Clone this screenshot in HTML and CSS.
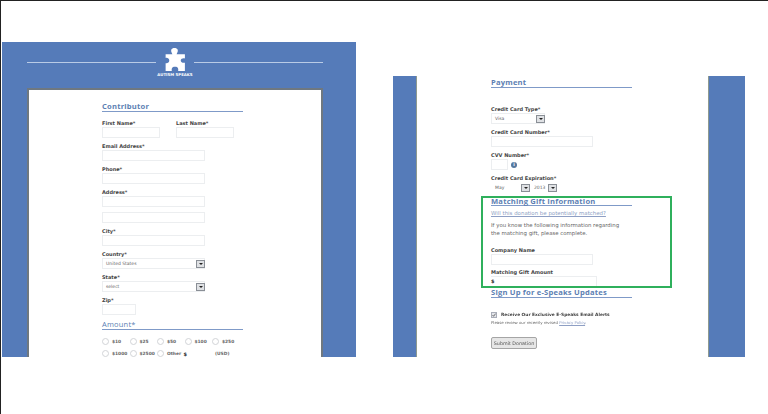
FILE: index.html
```html
<!DOCTYPE html>
<html lang="en">
<head>
<meta charset="utf-8">
<title>Donation form</title>
<link rel="stylesheet" href="styles.css">
</head>
<body>
<main class="stage">
  <section class="panel panel-left">
    <header class="brand">
      <span class="rule"></span>
      <div class="logo">
        <svg class="puzzle" viewBox="0 0 20 24" aria-hidden="true"><path d="M1 7H7.500C6.500 5 6 4 6.500 2.500C7 .5 12 .5 12.500 2.500C13 4 12.500 5 11.500 7H19.500V11C18 10.500 15.500 11 15.500 13C15.500 15 18 15.500 19.500 15V23H13C13.500 21 13 19 10 19C7 19 6.500 21 7 23H1V15.500C2.500 16 4.500 15 4.500 13C4.500 11 2.500 10 1 10.500Z" fill="#fff"/></svg>
        <span class="logo-text">AUTISM SPEAKS</span>
      </div>
      <span class="rule"></span>
    </header>
    <div class="card">
      <div class="form">
        <h2 class="heading">Contributor</h2>
        <div class="pair">
          <div><label class="label">First Name*</label><div class="input w58"></div></div>
          <div><label class="label">Last Name*</label><div class="input w58"></div></div>
        </div>
        <label class="label">Email Address*</label><div class="input w103"></div>
        <label class="label">Phone*</label><div class="input w103"></div>
        <label class="label">Address*</label><div class="input w103"></div><div class="input w103 again"></div>
        <label class="label">City*</label><div class="input w103"></div>
        <label class="label">Country*</label>
        <div class="select w103"><span>United States</span><i class="arrow"></i></div>
        <label class="label">State*</label>
        <div class="select w103"><span>select</span><i class="arrow"></i></div>
        <label class="label">Zip*</label><div class="input w34"></div>
        <h2 class="heading amount">Amount*</h2>
        <div class="radios">
          <span class="radio">$10</span><span class="radio">$25</span><span class="radio">$50</span><span class="radio">$100</span><span class="radio">$250</span>
        </div>
        <div class="radios second">
          <span class="radio">$1000</span><span class="radio">$2500</span><span class="radio">Other</span><span class="dollar">$</span><span class="usd">(USD)</span>
        </div>
      </div>
    </div>
  </section>
  <section class="panel panel-right">
    <div class="form">
      <h2 class="heading">Payment</h2>
      <label class="label first">Credit Card Type*</label>
      <div class="select w54"><span>Visa</span><i class="arrow"></i></div>
      <label class="label">Credit Card Number*</label><div class="input w102"></div>
      <label class="label">CVV Number*</label>
      <div class="cvv"><div class="input w17"></div><i class="info">i</i></div>
      <label class="label">Credit Card Expiration*</label>
      <div class="expiry">
        <div class="select w39"><span>May</span><i class="arrow"></i></div>
        <div class="select w26"><span>2013</span><i class="arrow"></i></div>
      </div>
      <div class="match">
        <h2 class="heading">Matching Gift Information</h2>
        <a class="link">Will this donation be potentially matched?</a>
        <p class="note">If you know the following information regarding<br>the matching gift, please complete.</p>
        <label class="label">Company Name</label><div class="input w102"></div>
        <label class="label">Matching Gift Amount</label>
        <div class="input w106 money">$</div>
      </div>
      <h2 class="heading signup">Sign Up for e-Speaks Updates</h2>
      <div class="check">
        <svg class="box" viewBox="0 0 6 6" aria-hidden="true"><rect x=".5" y=".5" width="5" height="5" fill="#e3e5ea" stroke="#a9adb8"/><path d="M1.500 3L2.600 4.300L4.600 1.600" fill="none" stroke="#555" stroke-width=".8"/></svg>
        <span>Receive Our Exclusive E-Speaks Email Alerts</span>
      </div>
      <p class="fine">Please review our recently revised <a class="link">Privacy Policy</a>.</p>
      <button class="submit" type="button">Submit Donation</button>
    </div>
  </section>
</main>
</body>
</html>
```
FILE: styles.css
```css
* { box-sizing: border-box; }
html, body { margin: 0; padding: 0; background: #fff; }
body { width: 768px; height: 414px; overflow: hidden; border-top: 1px solid #222; border-left: 1px solid #222; font-family: "DejaVu Sans", Verdana, sans-serif; color: #333; }
.stage { display: flex; align-items: flex-end; gap: 37px; height: 356px; padding-left: 1px; filter: blur(.5px); }
.panel { background: #557bb9; flex: none; overflow: hidden; }
.panel-left { width: 354px; height: 315px; display: flex; flex-direction: column; }
.panel-right { width: 352px; height: 281px; padding: 0 36px 0 23px; }
.panel-right .form { background: #fff; height: 100%; padding: 0 0 0 74px; border-left: 1px solid #8f9a8f; border-right: 1px solid #8f9a8f; }
.brand { height: 46px; flex: none; display: flex; align-items: flex-start; gap: 1px; padding: 0 33px 0 25px; }
.rule { flex: 1; height: 1px; background: #b9cbe6; margin-top: 20px; }
.logo { width: 36px; display: flex; flex-direction: column; align-items: center; margin-top: 5px; }
.puzzle { width: 22px; height: 25px; display: block; }
.logo-text { font-size: 3.900px; line-height: 6px; font-weight: 700; color: #fff; white-space: nowrap; }
.card { flex: 1; width: 296px; margin-left: 25px; background: #fff; border: 2px solid #6f7880; border-bottom: 0; padding: 10px 0 0 73px; overflow: hidden; }
.heading { width: 141px; margin: 0; height: 12px; border-bottom: 1px solid #7f9ac8; font-family: "Open Sans", "DejaVu Sans", sans-serif; font-size: 7.600px; line-height: 13px; font-weight: 700; color: #5d7fb3; letter-spacing: .2px; white-space: nowrap; }
.amount { margin-top: 3px; font-weight: 400; font-size: 7.500px; line-height: 12px; }
.label { display: block; height: 8px; margin: 4px 0 0; font-size: 5px; line-height: 8px; font-weight: 700; color: #444; white-space: nowrap; }
.first { margin-top: 17px; }
.pair { display: flex; gap: 16px; margin-top: 7px; }
.pair .label { margin-top: 0; }
.input { height: 11px; border: 1px solid #eceef0; background: #fff; }
.again { margin-top: 5px; }
.w58 { width: 58px; } .w103 { width: 103px; } .w34 { width: 34px; } .w102 { width: 102px; } .w106 { width: 106px; } .w17 { width: 17px; }
.w54 { width: 54px; } .w39 { width: 39px; } .w26 { width: 26px; }
.select { height: 11px; border: 1px solid #eceef0; display: flex; align-items: center; justify-content: space-between; padding-left: 3px; font-size: 4.500px; color: #666; }
.arrow { width: 9px; height: 8px; margin-right: -1px; background: #dfe1e4; border: 1px solid #8a8f96; position: relative; flex: none; }
.arrow::after { content: ""; position: absolute; left: 1.500px; top: 2px; border: 2px solid transparent; border-top: 2.500px solid #222; }
.radios { display: grid; grid-template-columns: repeat(5, 27.5px); margin-top: 8px; height: 7px; font-size: 4.400px; font-weight: 700; color: #666; align-items: center; white-space: nowrap; }
.second { margin-top: 5px; }
.radio { display: flex; align-items: center; gap: 3px; }
.radio::before { content: ""; width: 5px; height: 5px; border: 1px solid #d2d4d7; border-radius: 50%; flex: none; }
.dollar { color: #333; font-size: 5px; margin-left: -1px; }
.usd { margin-left: 3px; }
.cvv { display: flex; align-items: center; gap: 3px; }
.info { width: 6px; height: 6px; border-radius: 50%; background: #54789f; color: #fff; font-size: 4.500px; line-height: 6px; text-align: center; font-style: normal; font-weight: 700; }
.expiry { display: flex; gap: 1px; }
.expiry .select { border-color: #fff; }
.expiry .w26 { padding-left: 2px; }
.match { margin: 3px 0 0 -10px; width: 191px; height: 92px; padding: 0 0 0 8px; border: 2px solid #2fb05c; }
.match .heading { height: 8px; width: 141px; line-height: 7px; }
.link { display: block; font-size: 5.450px; line-height: 8px; color: #8e9fc4; text-decoration: underline; margin-top: 3px; white-space: nowrap; }
.note { margin: 5px 0 0; font-size: 5.400px; line-height: 7.500px; color: #666; white-space: nowrap; }
.match .label { margin-top: 3px; }
.match .note + .label { margin-top: 9px; }
.money { height: 10px; border-bottom: 0; border-left: 0; font-size: 5px; line-height: 9px; font-weight: 700; }
.signup { height: 10px; line-height: 8px; }
.check { display: flex; align-items: center; gap: 4px; height: 7px; margin-top: 13px; font-size: 4.350px; font-weight: 700; color: #444; white-space: nowrap; }
.box { width: 6px; height: 6px; flex: none; }
.fine { margin: 1px 0 0; font-size: 3.900px; line-height: 6px; color: #666; white-space: nowrap; }
.fine .link { display: inline; font-size: inherit; }
.submit { display: block; margin-top: 10px; width: 46px; height: 12px; padding: 0; border: 1px solid #a5a5a5; border-radius: 2px; background: #e6e6e6; font-family: inherit; font-size: 4.800px; color: #555; white-space: nowrap; }
```
